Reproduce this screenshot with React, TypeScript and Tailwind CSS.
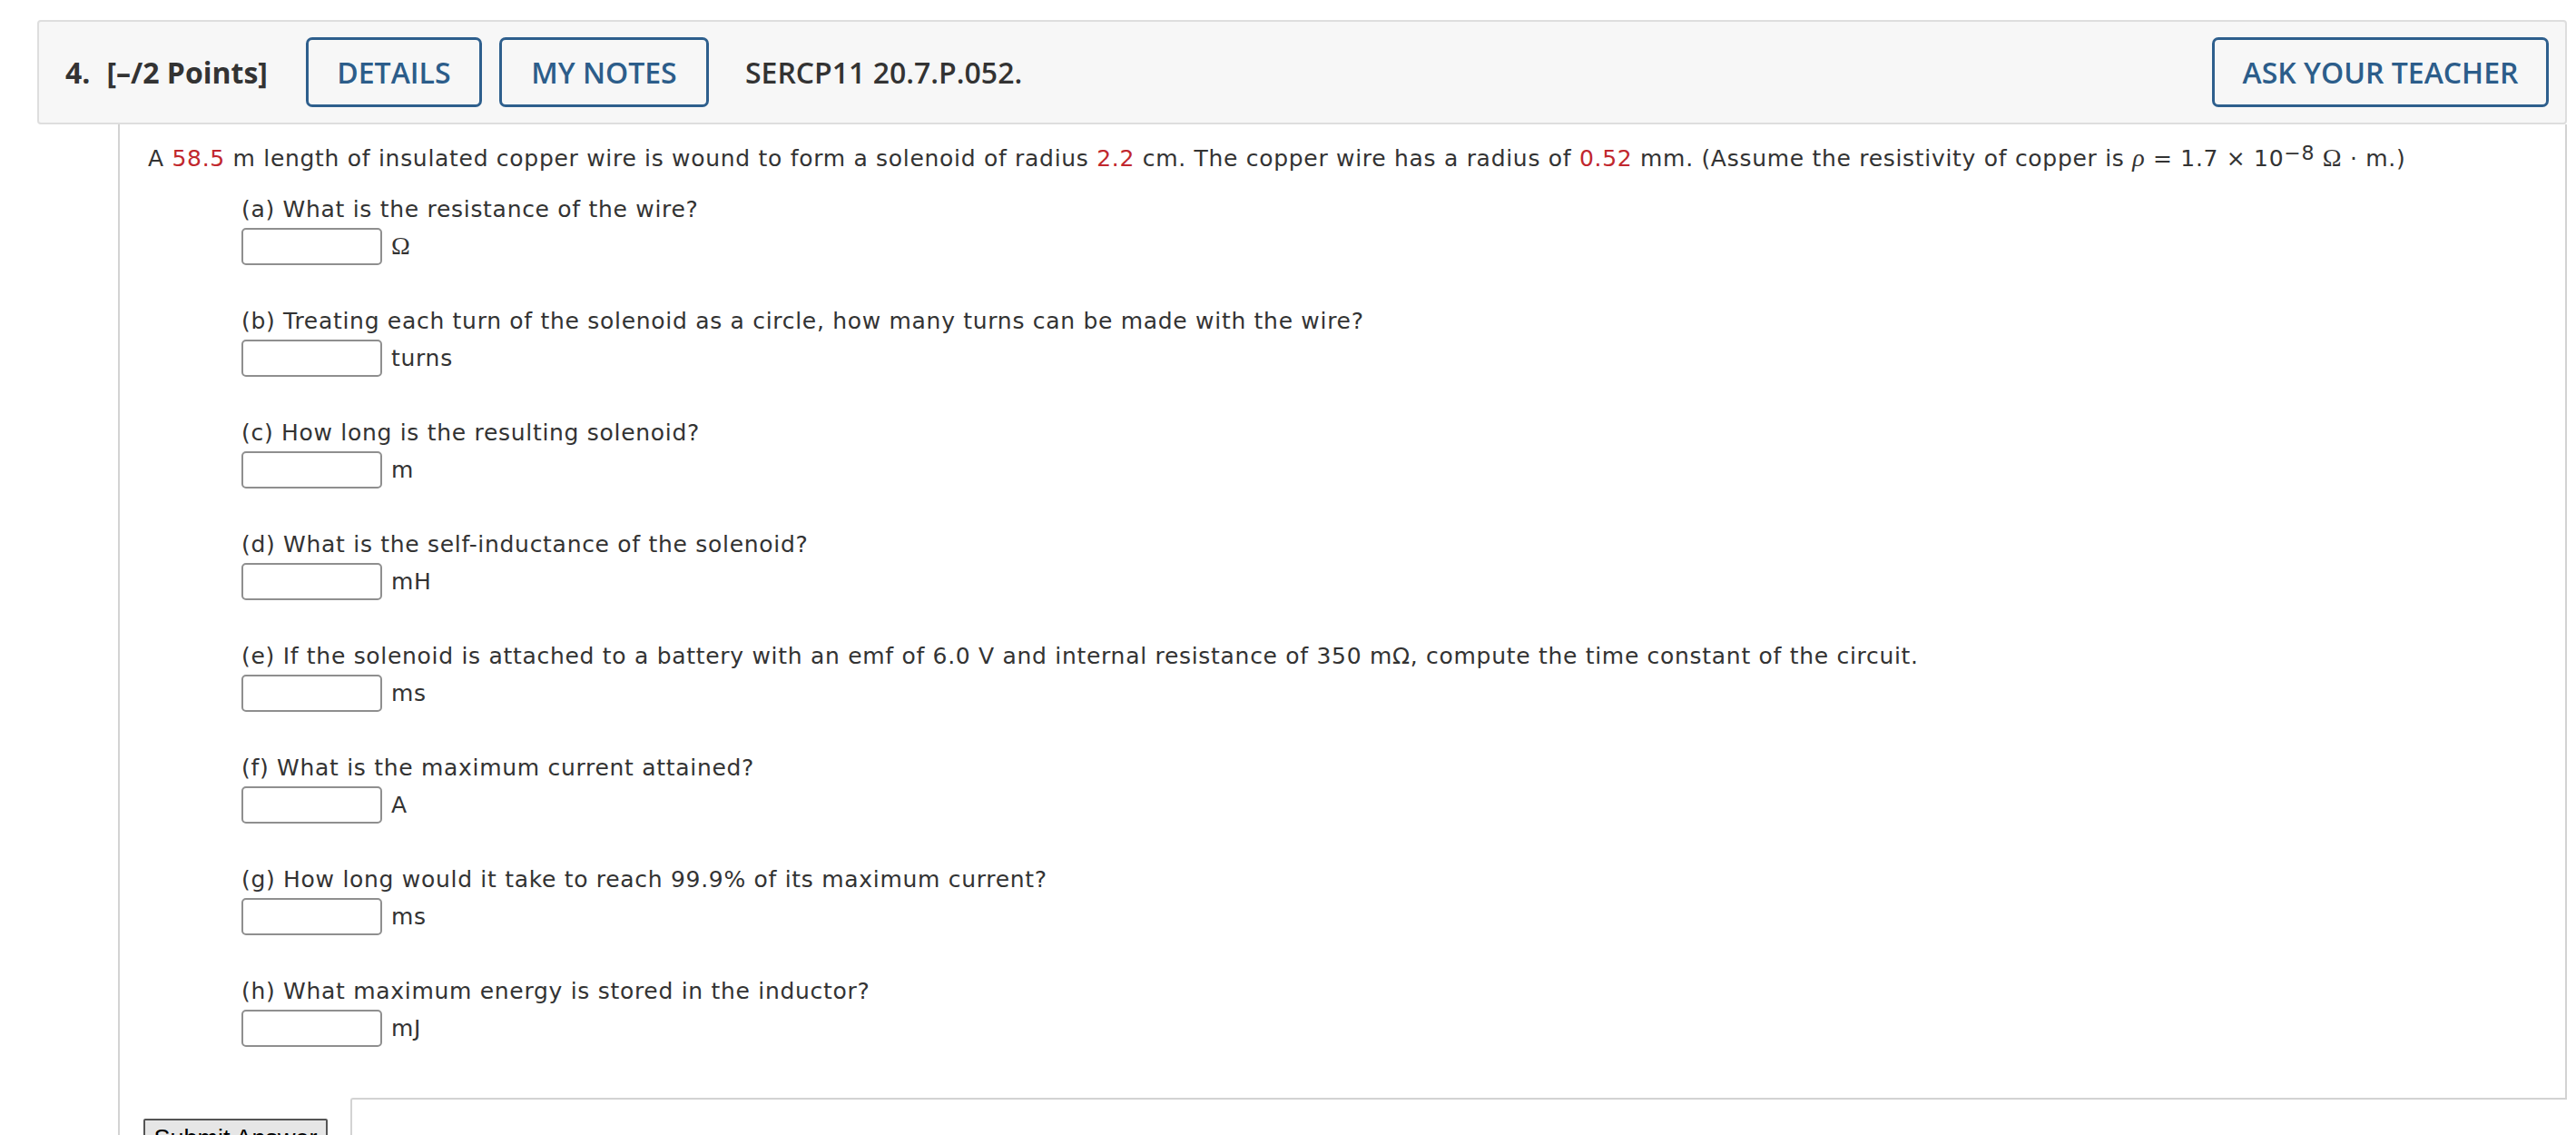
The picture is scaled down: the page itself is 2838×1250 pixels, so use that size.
import React from "react";

const body = { fontFamily: '"DejaVu Sans", Verdana, sans-serif' };
const head = { fontFamily: '"Open Sans", "Noto Sans", sans-serif' };
const serif = { fontFamily: '"Liberation Serif", "Times New Roman", serif' };

const questions: { label: React.ReactNode; unit: React.ReactNode }[] = [
  { label: "(a) What is the resistance of the wire?", unit: <span style={serif} className="text-[28px]">Ω</span> },
  { label: "(b) Treating each turn of the solenoid as a circle, how many turns can be made with the wire?", unit: "turns" },
  { label: "(c) How long is the resulting solenoid?", unit: "m" },
  { label: "(d) What is the self-inductance of the solenoid?", unit: "mH" },
  {
    label: "(e) If the solenoid is attached to a battery with an emf of 6.0 V and internal resistance of 350 mΩ, compute the time constant of the circuit.",
    unit: "ms",
  },
  { label: "(f) What is the maximum current attained?", unit: "A" },
  { label: "(g) How long would it take to reach 99.9% of its maximum current?", unit: "ms" },
  { label: "(h) What maximum energy is stored in the inductor?", unit: "mJ" },
];

function Red({ children }: { children: React.ReactNode }) {
  return <span className="text-[#c1272d]">{children}</span>;
}

function HeaderButton({ children, width }: { children: React.ReactNode; width: string }) {
  return (
    <div
      className={`${width} h-[77px] flex items-center justify-center border-[3px] border-[#2e5f8d] rounded-[7px] text-[#2c5d8a] text-[32px] font-semibold`}
    >
      {children}
    </div>
  );
}

export default function App() {
  return (
    <div className="bg-white min-h-[1250px] overflow-hidden text-[#333]">
      {/* question header */}
      <div
        style={head}
        className="mt-[22px] ml-[41px] w-[2787px] h-[115px] border-2 border-[#dedede] bg-[#f7f7f7] rounded-[4px] flex items-center pl-[29px] pr-[18px]"
      >
        <div className="text-[32px] font-bold text-[#333]">
          4.<span className="ml-[18px]">[–/2 Points]</span>
        </div>
        <div className="ml-[42px] flex gap-[19px]">
          <HeaderButton width="w-[194px]">DETAILS</HeaderButton>
          <HeaderButton width="w-[231px]">MY NOTES</HeaderButton>
        </div>
        <div className="ml-[40px] text-[32px] font-semibold text-[#333]">SERCP11 20.7.P.052.</div>
        <div className="ml-auto">
          <HeaderButton width="w-[371px]">ASK YOUR TEACHER</HeaderButton>
        </div>
      </div>

      {/* question body */}
      <div className="ml-[130px] w-[2698px] border-l-2 border-[#d3d3d3]" style={body}>
        <div className="border-r-2 border-[#d3d3d3] pl-[31px] pt-[20px] pb-[56px] text-[25px] tracking-[0.7px] leading-[34px]">
          <p>
            A <Red>58.5</Red> m length of insulated copper wire is wound to form a solenoid of radius <Red>2.2</Red> cm. The
            copper wire has a radius of <Red>0.52</Red> mm. (Assume the resistivity of copper is{" "}
            <span style={serif} className="italic text-[28px]">ρ</span> = 1.7 × 10
            <sup className="text-[22px] relative -top-[7px]">−8</sup>{" "}
            <span style={serif} className="text-[28px]">Ω</span> · m.)
          </p>

          <div className="pl-[103px] mt-[22px]">
            {questions.map((q, i) => (
              <div key={i} className="mb-[45px] last:mb-0">
                <p>{q.label}</p>
                <div className="mt-[3px] flex items-center h-[41px]">
                  <input
                    type="text"
                    className="w-[155px] h-[41px] border-2 border-[#8f8f8f] rounded-[5px] bg-white outline-none"
                  />
                  <span className="ml-[10px]">{q.unit}</span>
                </div>
              </div>
            ))}
          </div>
        </div>

        {/* submit row */}
        <div className="flex h-[80px]">
          <div className="w-[254px] pl-[26px] pt-[23px]">
            <button
              type="button"
              style={{ fontFamily: '"Liberation Sans", Arial, sans-serif' }}
              className="h-[44px] w-[203px] border-2 border-[#555] bg-[#e6e6e6] rounded-[2px] text-[27px] text-black leading-none"
            >
              Submit Answer
            </button>
          </div>
          <div className="flex-1 border-t-2 border-l-2 border-[#d3d3d3] rounded-tl-[3px]" />
        </div>
      </div>
    </div>
  );
}
